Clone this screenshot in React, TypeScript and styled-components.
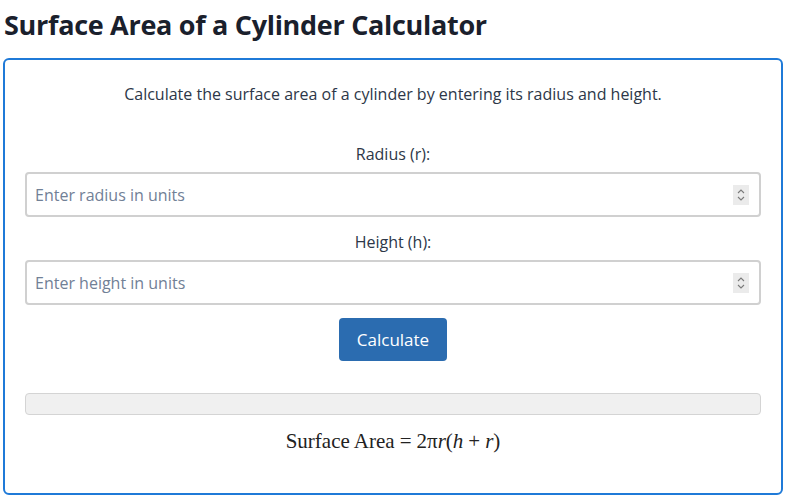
import React from "react";
import styled, { createGlobalStyle } from "styled-components";

const Global = createGlobalStyle`
  html, body { margin: 0; padding: 0; background: #ffffff; }
  body { font-family: "Open Sans", "Noto Sans", sans-serif; color: #2d3748; }
`;

const Page = styled.div`
  padding: 0 5px 0 3px;
`;

const Title = styled.h1`
  margin: 0;
  padding: 6px 0 0 1px;
  height: 58px;
  box-sizing: border-box;
  font-size: 27px;
  font-weight: 700;
  line-height: 38px;
  color: #1a202c;
  letter-spacing: -0.3px;
`;

const Card = styled.div`
  border: 2px solid #1f7ad8;
  border-radius: 6px;
  padding: 22px 20px 38px;
  display: flex;
  flex-direction: column;
  align-items: stretch;
`;

const Intro = styled.p`
  margin: 0 0 36px;
  text-align: center;
  font-size: 16px;
  line-height: 24px;
  color: #2d3748;
`;

const Group = styled.div`
  display: flex;
  flex-direction: column;
  margin-bottom: 13px;
`;

const Label = styled.label`
  text-align: center;
  font-size: 16px;
  line-height: 24px;
  margin-bottom: 6px;
  color: #2d3748;
`;

const Field = styled.div`
  position: relative;
`;

const Input = styled.input`
  box-sizing: border-box;
  width: 100%;
  height: 45px;
  border: 2px solid #d0d0d0;
  border-radius: 4px;
  padding: 0 40px 0 8px;
  font-family: "Open Sans", "Noto Sans", sans-serif;
  font-size: 16px;
  color: #2d3748;
  outline: none;
  background: #fff;
  -moz-appearance: textfield;
  &::-webkit-outer-spin-button,
  &::-webkit-inner-spin-button { -webkit-appearance: none; margin: 0; }
  &::placeholder { color: #718096; }
`;

const Spinner = styled.span`
  position: absolute;
  right: 12px;
  top: 50%;
  transform: translateY(-50%);
  width: 16px;
  height: 20px;
  background: #ebebeb;
  display: flex;
  align-items: center;
  justify-content: center;
  pointer-events: none;
`;

const ButtonRow = styled.div`
  display: flex;
  justify-content: center;
`;

const Button = styled.button`
  width: 108px;
  height: 43px;
  border: none;
  border-radius: 4px;
  background: #2b6cb0;
  color: #ffffff;
  font-family: "Open Sans", "Noto Sans", sans-serif;
  font-size: 17px;
  cursor: pointer;
`;

const Result = styled.div`
  margin-top: 32px;
  height: 22px;
  box-sizing: border-box;
  background: #f0f0f0;
  border: 1px solid #d4d4d4;
  border-radius: 4px;
`;

const Formula = styled.div`
  margin-top: 12px;
  text-align: center;
  font-family: "Liberation Serif", "DejaVu Serif", serif;
  font-size: 21px;
  line-height: 28px;
  color: #222;
`;

const Var = styled.i`
  font-style: italic;
`;

const Op = styled.span`
  margin: 0 5px;
`;

const SpinIcon = () => (
  <svg width="10" height="14" viewBox="0 0 10 14" fill="none" stroke="#7a7a7a" strokeWidth="1.1">
    <path d="M2 5 L5 2 L8 5" />
    <path d="M2 9 L5 12 L8 9" />
  </svg>
);

const NumberField = ({ id, placeholder }: { id: string; placeholder: string }) => (
  <Field>
    <Input id={id} type="number" placeholder={placeholder} />
    <Spinner>
      <SpinIcon />
    </Spinner>
  </Field>
);

export default function App() {
  return (
    <Page>
      <Global />
      <Title>Surface Area of a Cylinder Calculator</Title>
      <Card>
        <Intro>Calculate the surface area of a cylinder by entering its radius and height.</Intro>
        <Group>
          <Label htmlFor="radius">Radius (r):</Label>
          <NumberField id="radius" placeholder="Enter radius in units" />
        </Group>
        <Group>
          <Label htmlFor="height">Height (h):</Label>
          <NumberField id="height" placeholder="Enter height in units" />
        </Group>
        <ButtonRow>
          <Button>Calculate</Button>
        </ButtonRow>
        <Result />
        <Formula>
          Surface Area<Op>=</Op>2π<Var>r</Var>(<Var>h</Var><Op>+</Op><Var>r</Var>)
        </Formula>
      </Card>
    </Page>
  );
}
